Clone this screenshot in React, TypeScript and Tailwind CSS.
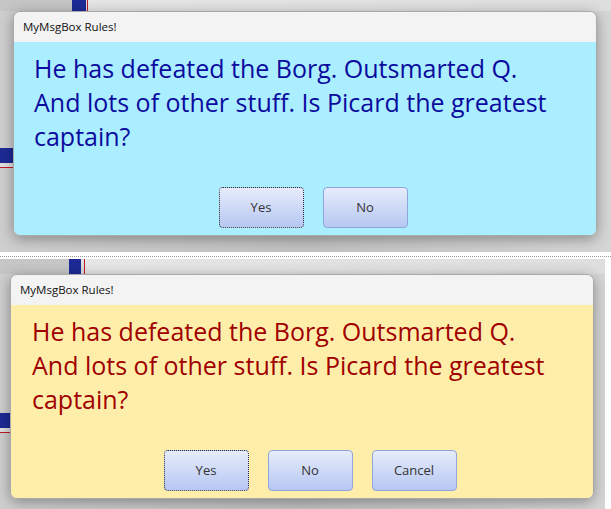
import React from 'react'

interface DialogProps {
  tone: 'blue' | 'yellow'
  buttons: string[]
}

interface CaptureProps {
  tone: 'blue' | 'yellow'
  buttons: string[]
  stripH: string
  gutterW: string
  grayW: string
  blueW: string
  redGap: string
  stripeTop: string
  width: string
}

const MESSAGE = [
  'He has defeated the Borg. Outsmarted Q.',
  'And lots of other stuff. Is Picard the greatest',
  'captain?',
]

function MsgDialog({ tone, buttons }: DialogProps) {
  const body = tone === 'blue' ? 'bg-[#aaeeff] text-[#0b0b9e]' : 'bg-[#ffeeaa] text-[#a00000]'
  const pad = tone === 'blue' ? 'pl-[20px]' : 'pl-[21px]'

  return (
    <div className="w-[584px] rounded-[7px] overflow-hidden border border-[#a9a9a9] shadow-[0_3px_14px_rgba(0,0,0,0.35)]">
      {/* Title bar */}
      <div className="h-[30px] bg-[#f3f3f3] flex items-center pl-[9px] text-[11.5px] text-[#111]">
        MyMsgBox Rules!
      </div>

      {/* Message */}
      <div className={`h-[193px] flex flex-col ${body}`}>
        <div className={`pt-[9px] ${pad} text-[25px] leading-[34px]`}>
          {MESSAGE.map((line) => (
            <div key={line}>{line}</div>
          ))}
        </div>

        <div className="mt-auto mb-[7px] flex justify-center gap-[19px] pl-[16px]">
          {buttons.map((label, i) => (
            <button
              key={label}
              className={`w-[85px] h-[41px] rounded-[4px] text-[13px] text-[#333] bg-gradient-to-b from-[#e7ecfb] to-[#b6c7f2] ${
                i === 0 ? 'border border-dotted border-[#2a2a3a]' : 'border border-[#8ea6dc]'
              }`}
            >
              {label}
            </button>
          ))}
        </div>
      </div>
    </div>
  )
}

// One screenshot: a window behind (blue/red edge) and the message box in front
function Capture({ tone, buttons, stripH, gutterW, grayW, blueW, redGap, stripeTop, width }: CaptureProps) {
  return (
    <div className={`${width} flex flex-col bg-gradient-to-r from-[#cfcfcf] via-[#c2c2c2] to-[#d6d6d6]`}>
      {/* Top edge of the window behind */}
      <div className={`${stripH} flex shrink-0`}>
        <div className={`${grayW} bg-[#c6c6c6]`} />
        <div className={`${blueW} bg-[#1d2a96]`} />
        <div className={`${redGap} bg-[#dcdcdc]`} />
        <div className="w-px bg-[#c01a2a]" />
        <div className="flex-1 bg-gradient-to-r from-[#e6e6e6] to-[#dedede]" />
      </div>

      <div className="flex items-start">
        {/* Left edge of the window behind */}
        <div className={`${gutterW} flex flex-col`}>
          <div className={stripeTop} />
          <div className="h-[15px] bg-[#1d2a96]" />
          <div className="h-[4px] bg-[#e0e0e0]" />
          <div className="h-px bg-[#c01a2a]" />
        </div>
        <MsgDialog tone={tone} buttons={buttons} />
      </div>
    </div>
  )
}

export default function App() {
  return (
    <div
      className="w-[611px] h-[509px] bg-white flex flex-col overflow-hidden"
      style={{ fontFamily: '"Open Sans", "Noto Sans", sans-serif' }}
    >
      <div className="h-[252px] flex">
        <Capture
          tone="blue"
          buttons={['Yes', 'No']}
          stripH="h-[11px]"
          gutterW="w-[13px]"
          grayW="w-[72px]"
          blueW="w-[14px]"
          redGap="w-[1px]"
          stripeTop="h-[137px]"
          width="w-[611px]"
        />
      </div>

      {/* Separator */}
      <div className="h-[4px]" />
      <div className="h-px border-t border-dotted border-[#9a9a9a]" />
      <div className="h-[2px]" />

      <div className="flex-1 flex">
        <Capture
          tone="yellow"
          buttons={['Yes', 'No', 'Cancel']}
          stripH="h-[15px]"
          gutterW="w-[10px]"
          grayW="w-[69px]"
          blueW="w-[12px]"
          redGap="w-[3px]"
          stripeTop="h-[139px]"
          width="w-[605px]"
        />
      </div>
    </div>
  )
}
